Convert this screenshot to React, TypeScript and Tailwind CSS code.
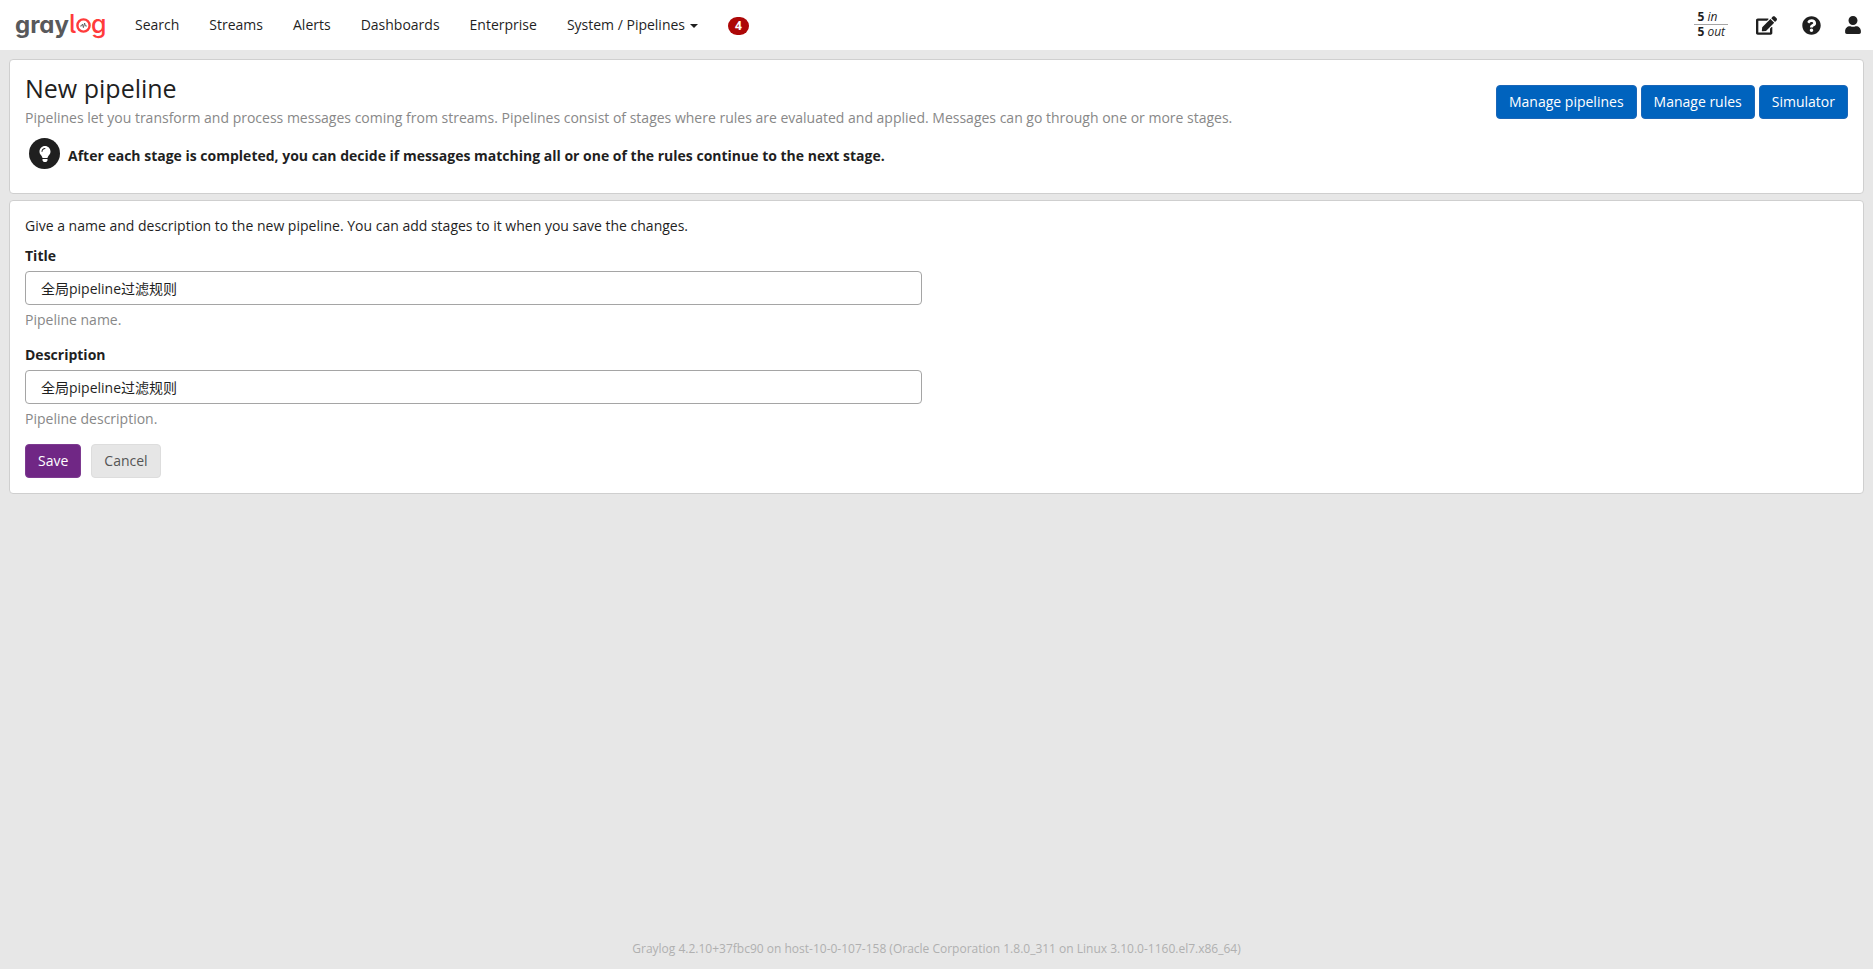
import { useState } from "react";
import { FaEdit, FaLightbulb, FaQuestionCircle, FaUser } from "react-icons/fa";

const navLinks = ["Search", "Streams", "Alerts", "Dashboards", "Enterprise"];
const actions = ["Manage pipelines", "Manage rules", "Simulator"];

function Logo() {
  return (
    <a
      href="#home"
      aria-label="Graylog"
      className="flex h-[50px] w-[120px] items-baseline px-[15px] font-['Inter',sans-serif] text-[24px] leading-[48px] [font-feature-settings:'cv11','cv05']"
    >
      <span className="font-bold text-[#58595b]">gray</span>
      <span className="flex items-baseline text-[25px] font-medium text-[#ff3b3b]">
        l
        <svg viewBox="0 0 15 15" className="size-[15px] shrink-0" aria-hidden="true">
          <circle cx="7.5" cy="7.5" r="6.1" fill="none" stroke="#ff3b3b" strokeWidth="2.4" />
          <path
            d="M4.2 8h1.3l1-2 .9 3.6L8.6 5l.8 3h1.5"
            fill="none"
            stroke="#58595b"
            strokeWidth="0.9"
          />
        </svg>
        g
      </span>
    </a>
  );
}

function Navbar() {
  return (
    <header className="flex h-[50px] items-center justify-between bg-white">
      <nav className="flex items-center">
        <Logo />
        {navLinks.map((label) => (
          <a key={label} href={`#${label.toLowerCase()}`} className="px-[15px]">
            {label}
          </a>
        ))}
        <button type="button" className="flex items-center gap-[5px] px-[15px]">
          System / Pipelines
          <span className="mt-0.5 border-x-4 border-t-4 border-x-transparent border-t-[#1f1f1f]" />
        </button>
        <a
          href="#notifications"
          className="ml-[15px] mt-0.5 flex h-[18px] w-[21px] items-center justify-center rounded-[10px] bg-[#ad0707] text-xs font-bold text-white"
        >
          4
        </a>
      </nav>
      <div className="flex items-center pr-3 text-[#1f1f1f]">
        <a href="#throughput" className="mb-0.5 mr-7 flex flex-col text-xs leading-[14px]">
          <span className="border-b border-[#a5a5a5] px-[3px]">
            <strong>5</strong> <i>in</i>
          </span>
          <span className="px-[3px]">
            <strong>5</strong> <i>out</i>
          </span>
        </a>
        <button type="button" aria-label="Scratchpad" className="mr-[25px]">
          <FaEdit className="size-[21px]" />
        </button>
        <button type="button" aria-label="Help" className="mr-6">
          <FaQuestionCircle className="size-[19px]" />
        </button>
        <button type="button" aria-label="User">
          <FaUser className="h-[18px] w-4" />
        </button>
      </div>
    </header>
  );
}

function Field({ id, label, help }: { id: string; label: string; help: string }) {
  const [value, setValue] = useState("全局pipeline过滤规则");
  return (
    <div className="mb-[15px]">
      <label htmlFor={id} className="mb-[5px] block font-bold">
        {label}
      </label>
      <input
        id={id}
        value={value}
        onChange={(e) => setValue(e.target.value)}
        className="block h-[34px] w-full rounded border border-[#a5a5a5] bg-white px-[15px] outline-none"
      />
      <p className="mt-[5px] text-[#888888]">{help}</p>
    </div>
  );
}

export default function App() {
  return (
    <div className="flex min-h-screen flex-col bg-[#e7e7e7] font-['Open_Sans','Noto_Sans_CJK_SC',sans-serif] text-sm text-[#1f1f1f]">
      <Navbar />
      <main className="flex flex-1 flex-col gap-1.5 px-[9px] pt-[9px]">
        <section className="flex items-start justify-between rounded border border-[#cfcfcf] bg-white px-[15px] pb-6 pt-[13px]">
          <div>
            <h1 className="text-[25px] leading-[30px]">New pipeline</h1>
            <p className="mt-[5px] text-[#888888]">
              Pipelines let you transform and process messages coming from streams. Pipelines consist of stages where
              rules are evaluated and applied. Messages can go through one or more stages.
            </p>
            <p className="mt-2.5 flex items-center gap-2 pl-1 font-bold">
              <span className="flex size-[31px] items-center justify-center rounded-full bg-[#1f1f1f] text-white">
                <FaLightbulb className="size-4" />
              </span>
              <span className="mt-1">
                After each stage is completed, you can decide if messages matching all or one of the rules continue to
                the next stage.
              </span>
            </p>
          </div>
          <div className="mt-3 flex shrink-0 gap-1">
            {actions.map((label) => (
              <button
                key={label}
                type="button"
                className="h-[34px] rounded border border-[#1a66b8] bg-[#0063be] px-3 text-white"
              >
                {label}
              </button>
            ))}
          </div>
        </section>

        <section className="rounded border border-[#cfcfcf] bg-white px-[15px] pb-[15px] pt-[15px]">
          <p className="mb-2.5">
            Give a name and description to the new pipeline. You can add stages to it when you save the changes.
          </p>
          <form className="w-1/2 pr-[15px]" onSubmit={(e) => e.preventDefault()}>
            <Field id="title" label="Title" help="Pipeline name." />
            <Field id="description" label="Description" help="Pipeline description." />
            <div className="flex gap-2.5">
              <button type="submit" className="h-[34px] rounded border border-[#7d3a90] bg-[#702785] px-3 text-white">
                Save
              </button>
              <button type="button" className="h-[34px] rounded border border-[#dddddd] bg-[#e6e6e6] px-3 text-[#555555]">
                Cancel
              </button>
            </div>
          </form>
        </section>
      </main>
      <footer className="pb-3 text-center text-xs text-[#b0b0b0]">
        Graylog 4.2.10+37fbc90 on host-10-0-107-158 (Oracle Corporation 1.8.0_311 on Linux 3.10.0-1160.el7.x86_64)
      </footer>
    </div>
  );
}
